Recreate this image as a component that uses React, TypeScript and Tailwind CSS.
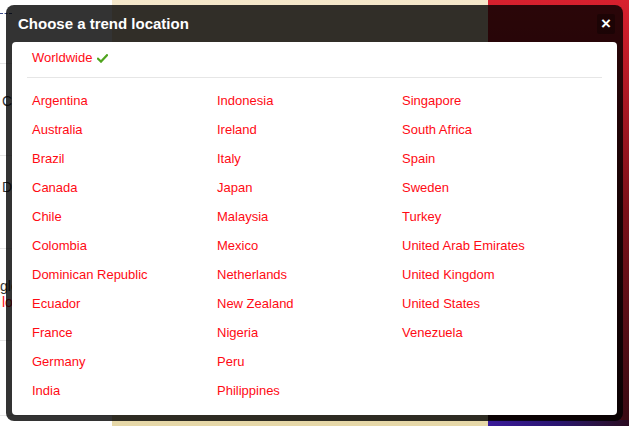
import React from "react";

const col1 = ["Argentina","Australia","Brazil","Canada","Chile","Colombia","Dominican Republic","Ecuador","France","Germany","India"];
const col2 = ["Indonesia","Ireland","Italy","Japan","Malaysia","Mexico","Netherlands","New Zealand","Nigeria","Peru","Philippines"];
const col3 = ["Singapore","South Africa","Spain","Sweden","Turkey","United Arab Emirates","United Kingdom","United States","Venezuela"];

function Column({ items }: { items: string[] }) {
  return (
    <ul className="flex flex-col">
      {items.map((n) => (
        <li key={n} className="h-[29px] leading-[29px] pl-[5px]">
          <a className="text-[#ff0a14] text-[13px] cursor-pointer">{n}</a>
        </li>
      ))}
    </ul>
  );
}

export default function App() {
  return (
    <div className="relative w-[629px] h-[426px] overflow-hidden font-['Liberation_Sans',Arial,sans-serif]">
      {/* page behind the dialog */}
      <div className="flex h-[426px]">
        <div className="w-[112px] bg-white flex flex-col text-[14px] text-[#333]">
          <div className="h-[13px]" />
          <div className="w-[12px] border-t border-dashed border-[#3a4a88]" />
          <div className="h-[49px]" />
          <div className="border-t border-[#e6e6e6]" />
          <div className="h-[29px]" />
          <div className="h-[16px] leading-[16px] pl-[2px]">C</div>
          <div className="h-[46px]" />
          <div className="border-t border-[#e6e6e6]" />
          <div className="h-[23px]" />
          <div className="h-[16px] leading-[16px] pl-[2px]">D</div>
          <div className="h-[53px]" />
          <div className="border-t border-[#e6e6e6]" />
          <div className="h-[29px]" />
          <div className="h-[16px] leading-[16px]">gle</div>
          <div className="h-[16px] leading-[16px] pl-[2px] text-[#ff0a14]">lo</div>
          <div className="h-[30px]" />
          <div className="border-t border-[#e6e6e6]" />
          <div className="h-[74px]" />
          <div className="border-t border-[#e6e6e6]" />
        </div>
        <div className="w-[376px] flex flex-col">
          <div className="flex-1 bg-gradient-to-b from-[#f4e7c9] via-[#efe0bb] to-[#e6d8a8]" />
        </div>
        <div className="flex-1 flex flex-col">
          <div className="flex-1 bg-gradient-to-b from-[#d8202e] via-[#7a1018] to-[#3a0a12]" />
          <div className="h-[6px] bg-gradient-to-r from-[#3a1a9a] via-[#2a1570] to-[#2a0a20]" />
        </div>
      </div>

      {/* dialog */}
      <div className="absolute left-[6px] top-[5px] w-[617px] h-[416px] rounded-[8px] bg-black/80 flex flex-col px-[6px] pb-[6px]">
        <div className="h-[37px] flex items-center justify-between pl-[6px] pr-[2px]">
          <h3 className="text-white font-bold text-[15px] leading-none">Choose a trend location</h3>
          <button className="w-[18px] h-[20px] flex items-center justify-center bg-black/30 rounded-[2px] text-white font-bold text-[17px] leading-none">
            ×
          </button>
        </div>
        <div className="flex-1 bg-white rounded-[4px] px-[15px]">
          <div className="pt-[8px] h-[24px] pl-[5px] flex items-start">
            <a className="text-[#ff0a14] text-[13px] leading-[16px] flex items-center gap-[5px]">
              Worldwide
              <svg width="11" height="9" viewBox="0 0 11 9" className="mt-[1px]">
                <path d="M1 4.8 L4 7.6 L10 1.2" fill="none" stroke="#4fa41e" strokeWidth="2.2" strokeLinecap="square" />
              </svg>
            </a>
          </div>
          <div className="mt-[11px] border-t border-[#e6e6e6]" />
          <div className="mt-[7px] grid grid-cols-[185px_185px_185px]">
            <Column items={col1} />
            <Column items={col2} />
            <Column items={col3} />
          </div>
        </div>
      </div>
    </div>
  );
}
